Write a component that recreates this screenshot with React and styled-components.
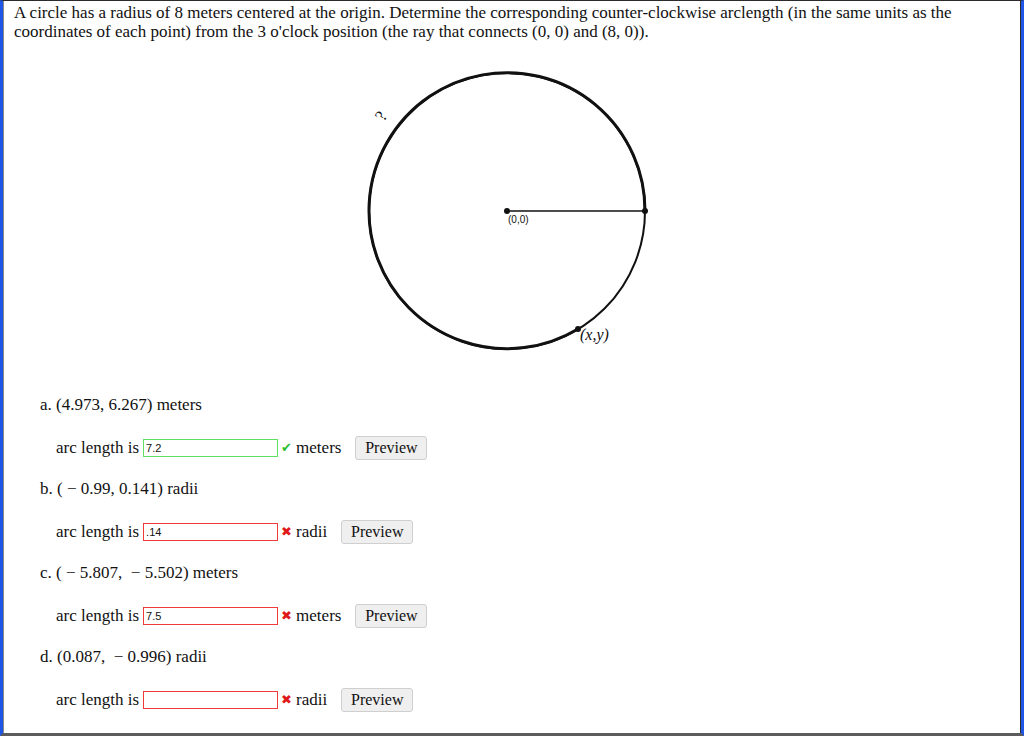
import * as React from "react";
import styled, { createGlobalStyle } from "styled-components";

const GlobalStyle = createGlobalStyle`
  html, body {
    margin: 0;
    padding: 0;
    background: #ffffff;
  }
`;

const Frame = styled.div`
  box-sizing: border-box;
  width: 1024px;
  height: 736px;
  border-top: 1px solid #2b2b2b;
  border-left: 3px solid #1f56e6;
  border-right: 3px solid #1f56e6;
  border-bottom: 3px solid #5c5c5c;
  overflow: hidden;
`;

const Page = styled.div`
  box-sizing: border-box;
  height: 100%;
  border-left: 1px solid #8a8a8a;
  border-right: 1px solid #2b2b2b;
  padding: 2px 10px 0 10px;
  font-family: "Liberation Serif", "Times New Roman", serif;
  font-size: 17px;
  color: #111;
`;

const Question = styled.p`
  margin: 0;
  line-height: 19px;
  max-width: 962px;
`;

const Figure = styled.div`
  margin-top: 20px;
  padding-left: 346px;
  height: 300px;
`;

const List = styled.div`
  margin-top: 35px;
  padding-left: 26px;
`;

const Item = styled.div`
  padding-bottom: 20px;
`;

const ItemHeader = styled.div`
  line-height: 18px;
  white-space: pre;
`;

const Row = styled.div`
  display: flex;
  align-items: center;
  height: 24px;
  margin-top: 22px;
  padding-left: 16px;
`;

const Label = styled.span`
  margin-right: 4px;
`;

const AnswerInput = styled.input`
  box-sizing: border-box;
  width: 135px;
  height: 18px;
  padding: 0 2px;
  border: 1px solid ${p => (p.$correct ? "#5fe05f" : "#f03a3a")};
  font-family: "Liberation Sans", Arial, sans-serif;
  font-size: 11px;
  color: #111;
  outline: none;
`;

const Mark = styled.span`
  width: 15px;
  margin-left: 3px;
  font-size: 13px;
  color: ${p => (p.$correct ? "#2fbf2f" : "#e01818")};
`;

const Unit = styled.span`
  margin-right: 14px;
`;

const PreviewButton = styled.button`
  box-sizing: border-box;
  width: 72px;
  height: 24px;
  padding: 0;
  background: #efefef;
  border: 1px solid #cfcfcf;
  border-radius: 3px;
  font-family: "Liberation Serif", "Times New Roman", serif;
  font-size: 16px;
  color: #111;
`;

const CircleFigure = () => (
  <svg width="300" height="300" viewBox="0 0 300 300">
    <circle cx="147" cy="150" r="138" fill="none" stroke="#111" strokeWidth="2" />
    <path
      d="M 285 150 A 138 138 0 1 0 218 268"
      fill="none"
      stroke="#111"
      strokeWidth="3"
    />
    <line x1="147" y1="150" x2="285" y2="150" stroke="#111" strokeWidth="1.5" />
    <circle cx="147" cy="150" r="3" fill="#111" />
    <circle cx="285" cy="150" r="3" fill="#111" />
    <circle cx="218" cy="268" r="3" fill="#111" />
    <text
      x="148"
      y="162"
      fontFamily="'Liberation Sans', Arial, sans-serif"
      fontSize="10"
      fill="#111"
    >
      (0,0)
    </text>
    <text
      x="220"
      y="279"
      fontFamily="'Liberation Serif', 'Times New Roman', serif"
      fontStyle="italic"
      fontSize="16"
      fill="#111"
    >
      (x,y)
    </text>
    <text
      x="0"
      y="0"
      transform="translate(24 61) rotate(-60)"
      fontFamily="'Liberation Serif', 'Times New Roman', serif"
      fontSize="17"
      fill="#111"
    >
      ?
    </text>
  </svg>
);

const items = [
  { id: "a", point: "(4.973, 6.267)", unit: "meters", value: "7.2", correct: true },
  { id: "b", point: "( \u2212 0.99, 0.141)", unit: "radii", value: ".14", correct: false },
  { id: "c", point: "( \u2212 5.807,  \u2212 5.502)", unit: "meters", value: "7.5", correct: false },
  { id: "d", point: "(0.087,  \u2212 0.996)", unit: "radii", value: "", correct: false }
];

const App = () => {
  return (
    <>
      <GlobalStyle />
      <Frame>
        <Page>
          <Question>
            A circle has a radius of 8 meters centered at the origin. Determine the
            corresponding counter-clockwise arclength (in the same units as the
            coordinates of each point) from the 3 o'clock position (the ray that
            connects (0, 0) and (8, 0)).
          </Question>
          <Figure>
            <CircleFigure />
          </Figure>
          <List>
            {items.map(item => (
              <Item key={item.id}>
                <ItemHeader>
                  {item.id}. {item.point} {item.unit}
                </ItemHeader>
                <Row>
                  <Label>arc length is</Label>
                  <AnswerInput
                    $correct={item.correct}
                    defaultValue={item.value}
                    readOnly
                  />
                  <Mark $correct={item.correct}>{item.correct ? "\u2714" : "\u2716"}</Mark>
                  <Unit>{item.unit}</Unit>
                  <PreviewButton>Preview</PreviewButton>
                </Row>
              </Item>
            ))}
          </List>
        </Page>
      </Frame>
    </>
  );
};

export default App;
